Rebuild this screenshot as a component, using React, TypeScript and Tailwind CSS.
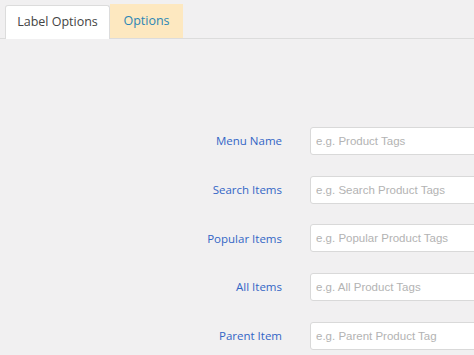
import React from 'react';

const fields = [
  { label: 'Menu Name', placeholder: 'e.g. Product Tags' },
  { label: 'Search Items', placeholder: 'e.g. Search Product Tags' },
  { label: 'Popular Items', placeholder: 'e.g. Popular Product Tags' },
  { label: 'All Items', placeholder: 'e.g. All Product Tags' },
  { label: 'Parent Item', placeholder: 'e.g. Parent Product Tag' },
];

export default function App() {
  return (
    <div
      className="w-[474px] h-[355px] overflow-hidden bg-[#f1f0f1]"
      style={{ fontFamily: '"Open Sans", "Noto Sans", sans-serif' }}
    >
      {/* Tabs */}
      <div className="flex items-end h-[39px] pl-[5px] border-b border-[#dcdcdc]">
        <button className="h-[34px] w-[105px] bg-white border border-b-0 border-[#dcdcdc] rounded-t-[3px] text-[12.5px] text-[#444] -mb-px">
          Label Options
        </button>
        <button className="h-[34px] w-[73px] bg-[#fde8c0] text-[12.5px] text-[#2b86b5]">
          Options
        </button>
      </div>

      {/* Form */}
      <div className="pt-[88px] flex flex-col gap-[20.7px]">
        {fields.map((f) => (
          <div key={f.label} className="flex items-center">
            <label className="w-[282px] shrink-0 text-right text-[11.5px] text-[#3366c6]">
              {f.label}
            </label>
            <input
              className="ml-[28px] w-[200px] h-[28px] shrink-0 bg-white border border-[#d9d9d9] rounded-[3px] px-[5px] text-[11.5px] placeholder:text-[#b3b3b3] outline-none"
              placeholder={f.placeholder}
              style={{ fontFamily: '"Liberation Sans", Arial, sans-serif' }}
            />
          </div>
        ))}
      </div>
    </div>
  );
}
